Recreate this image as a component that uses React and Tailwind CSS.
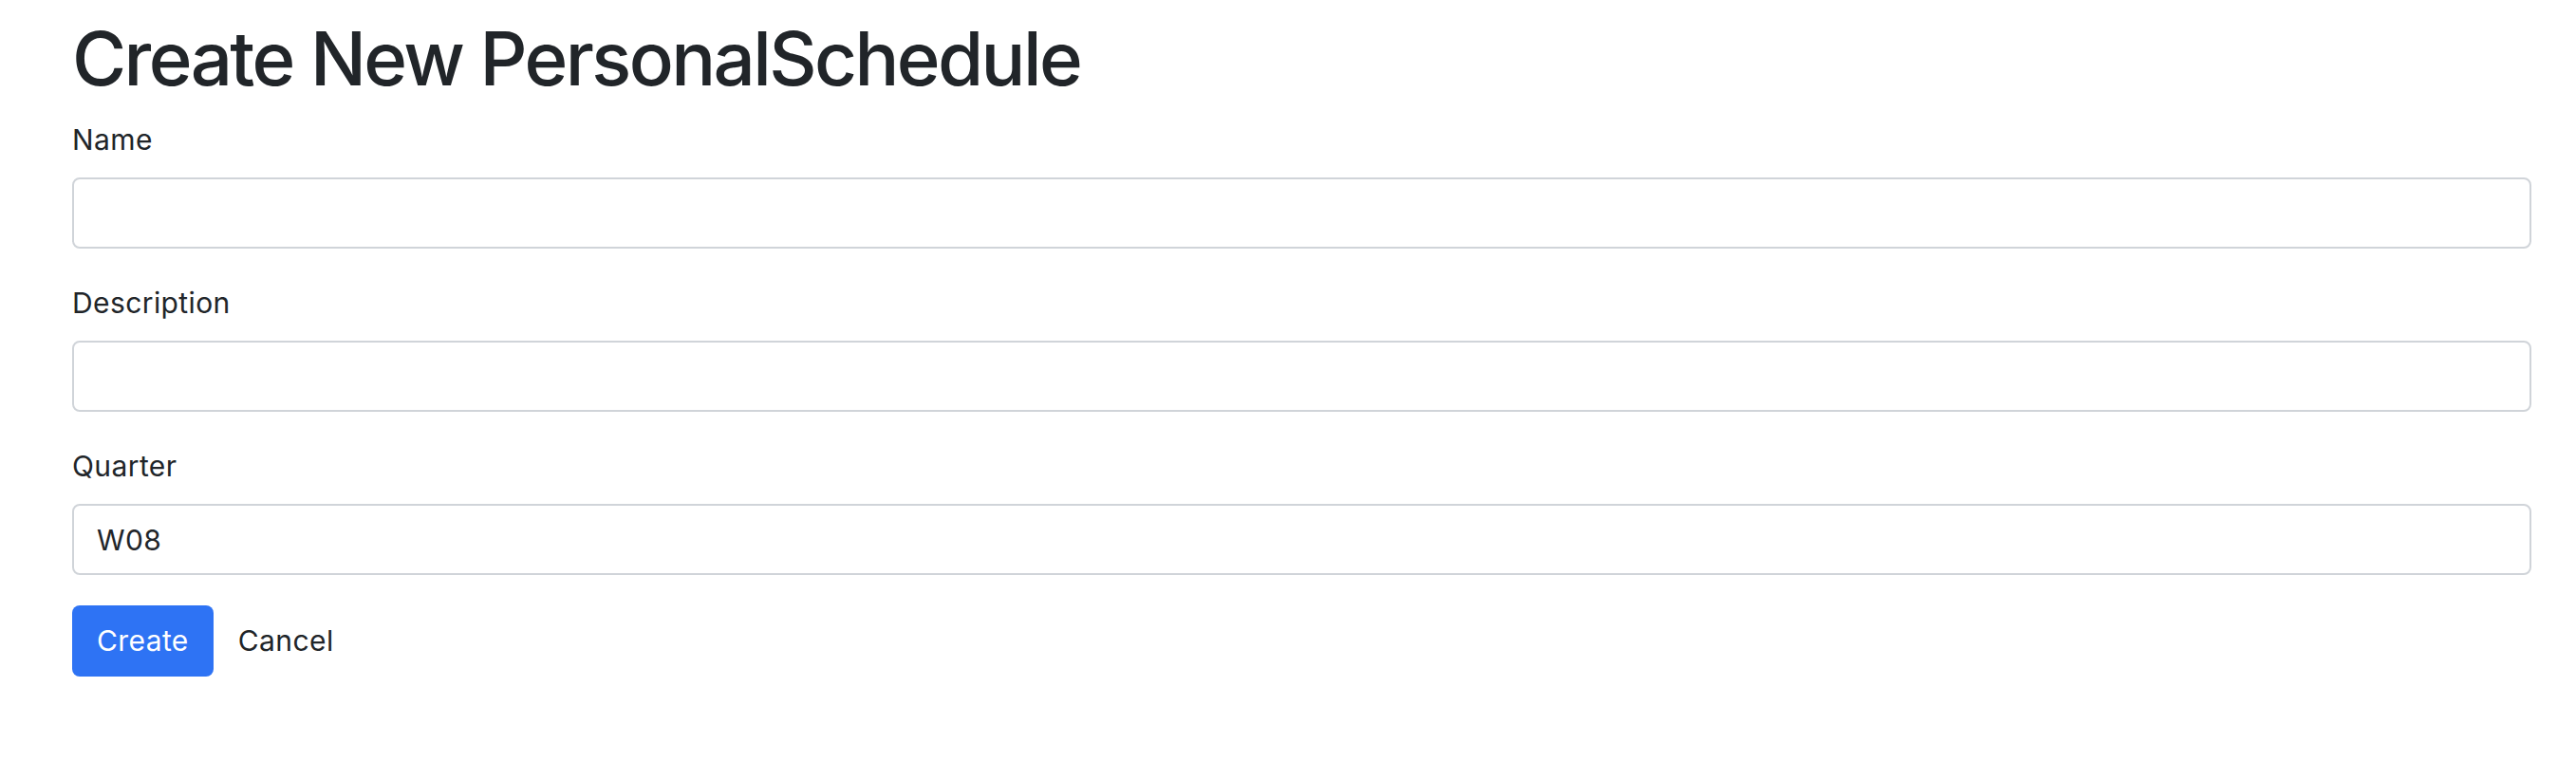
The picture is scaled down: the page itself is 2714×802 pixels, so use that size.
export default function App() {
  const font = { fontFamily: '"Inter", "Noto Sans", sans-serif' };
  return (
    <div
      className="min-h-[802px] w-full bg-white pl-[76px] pr-[47px] pt-[14px] text-[#212529]"
      style={font}
    >
      <h1 className="m-0 text-[78px] font-medium leading-[96px] tracking-[-2.6px]">
        Create New PersonalSchedule
      </h1>
      <form className="mt-[15px] flex flex-col" onSubmit={(e) => e.preventDefault()}>
        {[
          { label: "Name", value: "" },
          { label: "Description", value: "" },
          { label: "Quarter", value: "W08" },
        ].map((f) => (
          <div key={f.label} className="mb-[35px] flex flex-col">
            <label className="mb-[18px] text-[30px] leading-[44px] tracking-[0.4px]">{f.label}</label>
            <input
              type="text"
              defaultValue={f.value}
              className="h-[75px] w-full rounded-[8px] border-2 border-[#d0d4d9] bg-white px-[24px] text-[30px] tracking-[0.4px] text-[#212529] outline-none"
              style={font}
            />
          </div>
        ))}
        <div className="-mt-[3px] flex items-center">
          <button
            type="submit"
            className="h-[75px] rounded-[8px] bg-[#2e73f4] px-[26px] text-[30px] tracking-[0.4px] text-white"
            style={font}
          >
            Create
          </button>
          <button
            type="button"
            className="h-[75px] bg-transparent px-[26px] text-[30px] tracking-[0.4px] text-[#212529]"
            style={font}
          >
            Cancel
          </button>
        </div>
      </form>
    </div>
  );
}
